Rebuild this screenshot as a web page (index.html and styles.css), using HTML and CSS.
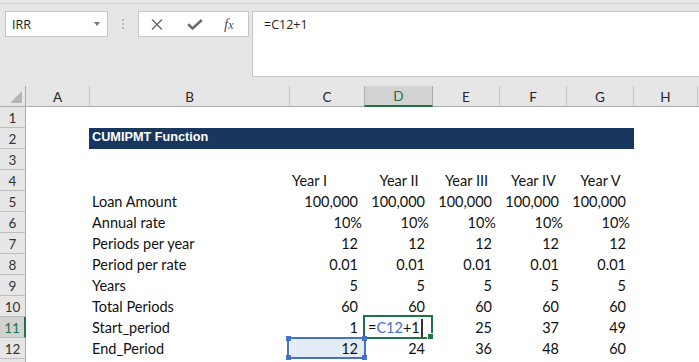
FILE: index.html
```html
<!DOCTYPE html>
<html>
<head>
<meta charset="utf-8">
<link rel="stylesheet" href="styles.css">
</head>
<body>
<div class="app">
  <div class="topstrip"></div>
  <div class="fbar">
    <div class="namebox"><span class="nb-text">IRR</span><span class="dd"></span></div>
    <div class="grip"></div>
    <div class="btns">
      <svg class="ic-x" width="12" height="11" viewBox="0 0 12 11"><path d="M1 0.5 L11 10.5 M11 0.5 L1 10.5" stroke="#6b6b6b" stroke-width="1.4" fill="none"/></svg>
      <svg class="ic-ok" width="16" height="11" viewBox="0 0 16 11"><path d="M1.2 5.2 L5.6 9.4 L14.8 1" stroke="#6b6b6b" stroke-width="2.6" fill="none"/></svg>
      <span class="fx">f<span class="fx-x">x</span></span>
    </div>
    <div class="formula">=C12+1</div>
  </div>

  <div class="sheet">
    <div class="row hdr">
      <div class="rh corner"><span class="tri"></span></div>
      <div class="ch">A</div>
      <div class="ch">B</div>
      <div class="ch">C</div>
      <div class="ch sel">D</div>
      <div class="ch">E</div>
      <div class="ch">F</div>
      <div class="ch">G</div>
      <div class="ch">H</div>
      <div class="ch last"></div>
    </div>

    <div class="row"><div class="rh">1</div></div>
    <div class="row"><div class="rh">2</div><div class="cell"></div><div class="title">CUMIPMT Function</div></div>
    <div class="row"><div class="rh">3</div></div>
    <div class="row">
      <div class="rh">4</div><div class="cell"></div><div class="cell"></div>
      <div class="cell left">Year I</div>
      <div class="cell mid">Year II</div>
      <div class="cell mid">Year III</div>
      <div class="cell mid">Year IV</div>
      <div class="cell mid">Year V</div>
    </div>
    <div class="row">
      <div class="rh">5</div><div class="cell"></div><div class="cell label">Loan Amount</div>
      <div class="cell num c">100,000</div><div class="cell num">100,000</div><div class="cell num">100,000</div><div class="cell num">100,000</div><div class="cell num">100,000</div>
    </div>
    <div class="row">
      <div class="rh">6</div><div class="cell"></div><div class="cell label">Annual rate</div>
      <div class="cell pct c">10%</div><div class="cell pct">10%</div><div class="cell pct">10%</div><div class="cell pct">10%</div><div class="cell pct">10%</div>
    </div>
    <div class="row">
      <div class="rh">7</div><div class="cell"></div><div class="cell label">Periods per year</div>
      <div class="cell num c">12</div><div class="cell num">12</div><div class="cell num">12</div><div class="cell num">12</div><div class="cell num">12</div>
    </div>
    <div class="row">
      <div class="rh">8</div><div class="cell"></div><div class="cell label">Period per rate</div>
      <div class="cell num c">0.01</div><div class="cell num">0.01</div><div class="cell num">0.01</div><div class="cell num">0.01</div><div class="cell num">0.01</div>
    </div>
    <div class="row">
      <div class="rh">9</div><div class="cell"></div><div class="cell label">Years</div>
      <div class="cell num c">5</div><div class="cell num">5</div><div class="cell num">5</div><div class="cell num">5</div><div class="cell num">5</div>
    </div>
    <div class="row">
      <div class="rh">10</div><div class="cell"></div><div class="cell label">Total Periods</div>
      <div class="cell num c">60</div><div class="cell num">60</div><div class="cell num">60</div><div class="cell num">60</div><div class="cell num">60</div>
    </div>
    <div class="row">
      <div class="rh sel">11</div><div class="cell"></div><div class="cell label">Start_period</div>
      <div class="cell num c">1</div>
      <div class="cell edit">=<span class="ref">C12</span>+1<span class="cursor"></span></div>
      <div class="cell num">25</div><div class="cell num">37</div><div class="cell num">49</div>
    </div>
    <div class="row">
      <div class="rh">12</div><div class="cell"></div><div class="cell label">End_Period</div>
      <div class="cell num c refcell">12</div><div class="cell num">24</div><div class="cell num">36</div><div class="cell num">48</div><div class="cell num">60</div>
    </div>
    <div class="row"><div class="rh"></div></div>

    <div class="active-box"><span class="handle"></span></div>
    <div class="ref-box"><span class="knob tl"></span><span class="knob tr"></span><span class="knob bl"></span><span class="knob br"></span></div>
  </div>
</div>
</body>
</html>
```

FILE: styles.css
```css
html, body {
  margin: 0;
  padding: 0;
  background: #ffffff;
  overflow: hidden;
}
.app {
  width: 699px;
  height: 362px;
  overflow: hidden;
  background: #e6e6e6;
  font-family: "Lato", "Open Sans", sans-serif;
}
.topstrip {
  height: 3px;
  border-bottom: 1px solid #d2d2d2;
  background: #e9e9e9;
}
.fbar {
  display: flex;
  align-items: flex-start;
  padding-top: 7px;
  padding-left: 5px;
  height: 66px;
}
.namebox {
  box-sizing: border-box;
  width: 103px;
  height: 26px;
  background: #ffffff;
  border: 1px solid #c6c6c6;
  display: flex;
  align-items: center;
  justify-content: space-between;
  padding: 0 7px 0 6px;
  font-family: "Open Sans", sans-serif;
  font-size: 12.5px;
  color: #222;
}
.dd {
  width: 0;
  height: 0;
  border-left: 3.5px solid transparent;
  border-right: 3.5px solid transparent;
  border-top: 4px solid #777;
}
.grip {
  width: 2px;
  height: 12px;
  margin: 8px 0 0 14px;
  background: repeating-linear-gradient(to bottom, #bdbdbd 0 2px, transparent 2px 4px);
}
.btns {
  box-sizing: border-box;
  margin-left: 14px;
  width: 111px;
  height: 26px;
  background: #ffffff;
  border: 1px solid #c6c6c6;
  display: flex;
  align-items: center;
  padding-left: 12px;
}
.ic-x { margin-top: 1px; }
.ic-ok { margin-left: 24px; margin-top: 1px; }
.fx {
  margin-left: 21px;
  font-family: "Liberation Serif", serif;
  font-style: italic;
  font-size: 15px;
  color: #555;
  line-height: 1;
}
.fx-x { font-size: 12px; }
.formula {
  box-sizing: border-box;
  margin-left: 3px;
  flex: 1;
  height: 66px;
  background: #ffffff;
  border: 1px solid #c6c6c6;
  border-right: none;
  padding: 4px 0 0 11px;
  font-family: "Open Sans", sans-serif;
  font-size: 12.5px;
  line-height: 17px;
  color: #222;
}

.sheet {
  position: relative;
  margin-top: 9px;
  background: #ffffff;
}
.row {
  display: grid;
  grid-template-columns: 26px 64px 200px 75px 68px 67px 67px 67px 64px 1fr;
  height: 21px;
}
.rh {
  box-sizing: border-box;
  height: 21px;
  background: #e6e6e6;
  border-right: 1px solid #ababab;
  border-bottom: 1px solid #bdbdbd;
  display: flex;
  align-items: center;
  justify-content: center;
  font-size: 13.5px;
  color: #333;
  padding-top: 1px;
}
.rh.sel {
  background: #d2d2d2;
  border-right: 2px solid #217346;
  color: #217346;
}
.corner {
  justify-content: flex-end;
  align-items: flex-end;
  padding: 0 3px 3px 0;
  border-bottom: 1px solid #ababab;
}
.tri {
  width: 12px;
  height: 12px;
  background: #b5b5b5;
  clip-path: polygon(100% 0, 100% 100%, 0 100%);
}
.ch {
  box-sizing: border-box;
  height: 21px;
  background: #e6e6e6;
  border-right: 1px solid #c4c4c4;
  border-bottom: 1px solid #ababab;
  display: flex;
  align-items: center;
  justify-content: center;
  font-size: 13.5px;
  color: #262626;
  padding-top: 1px;
}
.ch.sel {
  background: #d2d2d2;
  border-right-color: #ababab;
  border-left: 1px solid #ababab;
  margin-left: -1px;
  border-bottom: 2px solid #217346;
  color: #217346;
}
.ch.last { border-right: none; }

.cell {
  box-sizing: border-box;
  height: 21px;
  display: flex;
  align-items: flex-end;
  padding-bottom: 2px;
  font-size: 14.5px;
  line-height: 17px;
  color: #111;
  white-space: nowrap;
}
.label, .left { padding-left: 2px; }
.mid { justify-content: center; }
.num { justify-content: flex-end; padding-right: 8px; }
.num.c { padding-right: 7px; }
.pct { justify-content: flex-end; padding-right: 4px; }
.pct.c { padding-right: 3px; }
.title {
  grid-column: 3 / 9;
  margin-left: -1px;
  background: #17375e;
  color: #ffffff;
  font-family: "Liberation Sans", Arial, sans-serif;
  font-weight: bold;
  font-size: 12.7px;
  display: flex;
  align-items: flex-end;
  padding: 0 0 4px 3px;
  line-height: 15px;
}
.edit { padding-left: 3px; }
.ref { color: #4472c4; }
.cursor {
  display: inline-block;
  width: 2px;
  height: 19px;
  background: #333;
  margin-left: 1px;
  margin-bottom: -2px;
}
.refcell { background: #e4ecf8; }

.active-box {
  position: absolute;
  left: 363px;
  top: 229px;
  width: 70px;
  height: 24px;
  box-sizing: border-box;
  border: 2px solid #217346;
}
.handle {
  position: absolute;
  right: -3px;
  bottom: -3px;
  width: 5px;
  height: 5px;
  background: #217346;
  border: 1px solid #ffffff;
}
.ref-box {
  position: absolute;
  left: 287px;
  top: 251px;
  width: 79px;
  height: 22px;
  box-sizing: border-box;
  border: 2px solid #4472c4;
}
.knob {
  position: absolute;
  width: 5px;
  height: 5px;
  background: #4472c4;
}
.tl { left: -3px; top: -3px; }
.tr { right: -3px; top: -3px; }
.bl { left: -3px; bottom: -3px; }
.br { right: -3px; bottom: -3px; }
```
